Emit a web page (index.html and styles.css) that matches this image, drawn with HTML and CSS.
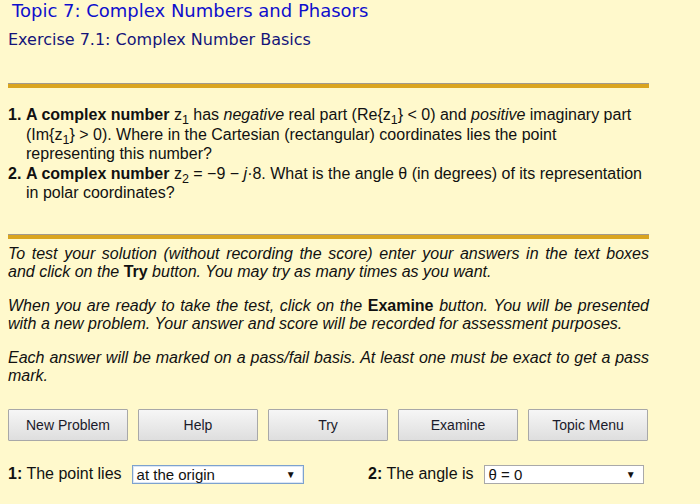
FILE: index.html
```html
<!DOCTYPE html>
<html>
<head>
<meta charset="utf-8">
<link rel="stylesheet" href="styles.css">
</head>
<body>
<h1 class="topic">Topic 7: Complex Numbers and Phasors</h1>
<h2 class="exercise">Exercise 7.1: Complex Number Basics</h2>
<div class="rule rule-top"></div>
<ol class="questions">
  <li><span class="num">1.</span><span class="qtext"><b>A complex number</b> <i class="var">z</i><sub>1</sub> has <i>negative</i> real part (Re{<i class="var">z</i><sub>1</sub>} &lt; 0) and <i>positive</i> imaginary part (Im{<i class="var">z</i><sub>1</sub>} &gt; 0). Where in the Cartesian (rectangular) coordinates lies the point representing this number?</span></li>
  <li><span class="num">2.</span><span class="qtext"><b>A complex number</b> <i class="var">z</i><sub>2</sub> = −9 − <i>j</i>·8. What is the angle θ (in degrees) of its representation in polar coordinates?</span></li>
</ol>
<div class="rule rule-mid"></div>
<div class="instructions">
  <p>To test your solution (without recording the score) enter your answers in the text boxes and click on the <b>Try</b> button. You may try as many times as you want.</p>
  <p>When you are ready to take the test, click on the <b>Examine</b> button. You will be presented with a new problem. Your answer and score will be recorded for assessment purposes.</p>
  <p>Each answer will be marked on a pass/fail basis. At least one must be exact to get a pass mark.</p>
</div>
<div class="buttons">
  <button class="btn">New Problem</button>
  <button class="btn">Help</button>
  <button class="btn">Try</button>
  <button class="btn">Examine</button>
  <button class="btn">Topic Menu</button>
</div>
<div class="answers">
  <div class="answer">
    <span class="label"><b>1:</b> The point lies</span>
    <div class="select select-focus"><span>at the origin</span><span class="arrow">▼</span></div>
  </div>
  <div class="answer">
    <span class="label"><b>2:</b> The angle is</span>
    <div class="select select-wide"><span>θ = 0</span><span class="arrow">▼</span></div>
  </div>
</div>
</body>
</html>
```
FILE: styles.css
```css
html, body {
  margin: 0;
  padding: 0;
}
body {
  background: #fff9cc;
  padding: 0 8px;
  width: 641px;
  font-family: "Liberation Sans", Arial, sans-serif;
  font-size: 16px;
  color: #111;
}
.topic {
  font-family: "DejaVu Sans", Verdana, sans-serif;
  font-weight: normal;
  font-size: 18px;
  line-height: 22px;
  color: #0f0fcc;
  margin: 0;
  padding: 0 0 0 4px;
}
.exercise {
  font-family: "DejaVu Sans", Verdana, sans-serif;
  font-weight: normal;
  font-size: 16px;
  line-height: 20px;
  color: #14147a;
  margin: 8px 0 0 0;
}
.rule {
  height: 4px;
  background: #daa520;
  border-top: 1px solid #a09a90;
}
.rule-top {
  margin-top: 33px;
}
.questions {
  list-style: none;
  margin: 17px 0 0 0;
  padding: 0;
  line-height: 19.5px;
}
.questions li {
  display: flex;
}
.num {
  font-weight: bold;
  width: 18px;
  flex: none;
}
.qtext b {
  font-weight: bold;
}
sub {
  font-size: 12.5px;
  vertical-align: -4px;
  line-height: 0;
}
.var {
  font-style: normal;
}
.rule-mid {
  margin-top: 31px;
}
.instructions {
  margin-top: 6px;
}
.instructions p {
  font-style: italic;
  text-align: justify;
  line-height: 18px;
  margin: 0 0 16px 0;
}
.instructions p b {
  font-style: normal;
}
.buttons {
  display: flex;
  gap: 10px;
  margin-top: 24px;
}
.btn {
  width: 120px;
  height: 32px;
  flex: none;
  border: 1px solid #a8a8a8;
  border-radius: 1px;
  background: linear-gradient(#f6f6f6, #dedede);
  font-family: "Liberation Sans", Arial, sans-serif;
  font-size: 14px;
  color: #1a1a2a;
  padding: 0;
}
.answers {
  display: grid;
  grid-template-columns: 360px auto;
  margin-top: 24px;
}
.answer {
  display: flex;
  align-items: center;
  gap: 10px;
}
.label {
  font-size: 16px;
}
.select {
  box-sizing: border-box;
  height: 19px;
  background: #fff;
  border: 1px solid #a9a9a9;
  display: flex;
  align-items: center;
  justify-content: space-between;
  padding: 0 7px 0 4px;
  font-size: 15px;
  color: #111;
}
.select-focus {
  width: 172px;
  border-color: #7da2ce;
  box-shadow: inset 0 0 0 1px #dbe6f5;
}
.select-wide {
  width: 160px;
}
.arrow {
  font-size: 10px;
}
```
